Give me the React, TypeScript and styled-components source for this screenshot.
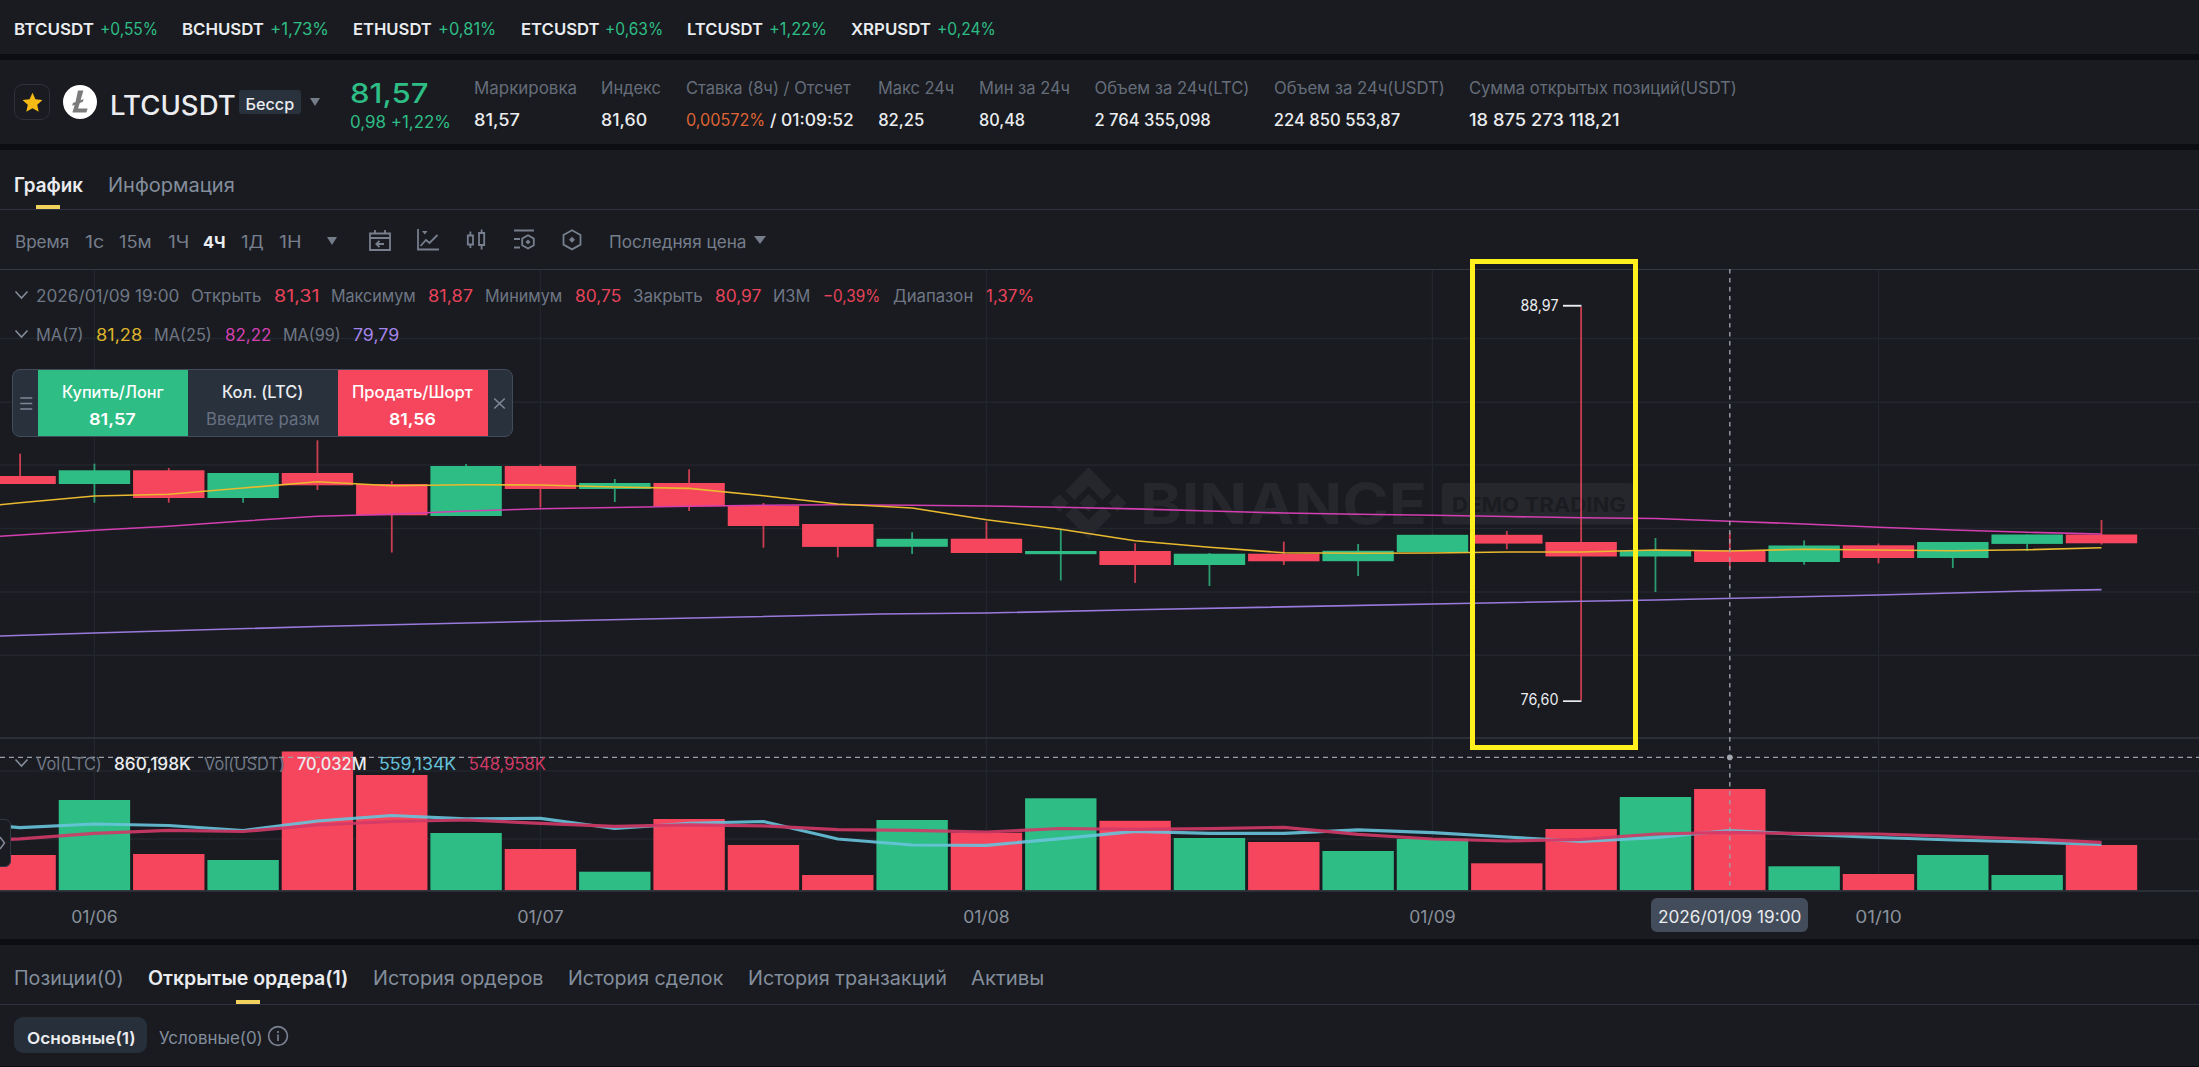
import React, { useLayoutEffect, useRef, useState } from "react";
import styled, { createGlobalStyle } from "styled-components";

const c = {
  bg: "#191b20",
  gap: "#0b0d11",
  line: "#2f3340",
  text: "#eaecef",
  mute: "#848e9c",
  dim: "#666d7a",
  legend: "#6f7785",
  tool: "#767e8c",
  green: "#2ebd85",
  red: "#f6465d",
  panel: "#29313d",
};

const Global = createGlobalStyle`
  * { box-sizing: border-box; }
  body {
    margin: 0;
    background: ${c.bg};
    color: ${c.text};
    font-family: Inter, "Open Sans", "Liberation Sans", sans-serif;
    overflow: hidden;
  }
`;

/* ---------- text ---------- */

interface TextStyle {
  $w: number;
  $size?: number;
  $weight?: number;
  $color?: string;
  $ml?: number;
}

const TextBox = styled.span<TextStyle>`
  display: block;
  flex: none;
  width: ${(p) => p.$w}px;
  margin-left: ${(p) => p.$ml ?? 0}px;
  font-size: ${(p) => p.$size ?? 16.6}px;
  font-weight: ${(p) => p.$weight ?? 400};
  line-height: 20px;
  color: ${(p) => p.$color ?? "inherit"};
  white-space: nowrap;
`;

const TextRun = styled.span`
  display: inline-block;
  transform-origin: 0 50%;
`;

interface TextProps {
  children: string;
  w: number;
  size?: number;
  weight?: number;
  color?: string;
  ml?: number;
}

/* Stretches a label so that it fills the width of its column. */
function Text({ children, w, size, weight, color, ml }: TextProps) {
  const ref = useRef<HTMLSpanElement>(null);
  const [scale, setScale] = useState(1);
  useLayoutEffect(() => {
    if (ref.current) setScale(w / ref.current.offsetWidth);
  }, [children, w]);
  return (
    <TextBox $w={w} $size={size} $weight={weight} $color={color} $ml={ml}>
      <TextRun ref={ref} style={{ transform: `scaleX(${scale})` }}>
        {children}
      </TextRun>
    </TextBox>
  );
}

/* ---------- layout ---------- */

const Page = styled.main`
  width: 2199px;
  height: 1067px;
  display: flex;
  flex-direction: column;
  background: ${c.bg};
  overflow: hidden;
`;

const Strip = styled.div`
  flex: none;
  height: 6px;
  background: ${c.gap};
`;

const Ticker = styled.header`
  flex: none;
  height: 54px;
  padding: 4px 0 0 14px;
  display: flex;
  align-items: center;
  gap: 24px;
`;

const TickerItem = styled.div`
  display: flex;
  gap: 6px;
`;

const SymbolBar = styled.section`
  flex: none;
  height: 84px;
  padding-left: 14px;
  display: flex;
  align-items: flex-start;
`;

const StarButton = styled.button`
  width: 36px;
  height: 36px;
  margin-top: 24px;
  padding: 0;
  display: flex;
  align-items: center;
  justify-content: center;
  background: none;
  border: 1px solid #2d3139;
  border-radius: 9px;
`;

const Coin = styled.svg`
  margin: 25px 0 0 13px;
  flex: none;
`;

const SymbolName = styled.div`
  margin: 35px 0 0 13px;
`;

const Badge = styled.div`
  margin: 30px 0 0 3px;
  width: 62px;
  height: 24px;
  padding-top: 4px;
  display: flex;
  justify-content: center;
  align-items: center;
  background: ${c.panel};
  border-radius: 3px;
`;

const Caret = styled.i<{ $ml: number; $mt?: number; $w?: number }>`
  flex: none;
  width: 0;
  height: 0;
  margin: ${(p) => p.$mt ?? 0}px 0 0 ${(p) => p.$ml}px;
  border-left: ${(p) => (p.$w ?? 11) / 2}px solid transparent;
  border-right: ${(p) => (p.$w ?? 11) / 2}px solid transparent;
  border-top: 8px solid #757d8a;
`;

const Price = styled.div`
  margin: 23px 0 0 30px;
  display: flex;
  flex-direction: column;
  gap: 9px;
`;

const Stats = styled.div`
  margin: 18px 0 0 23px;
  display: flex;
  gap: 24.4px;
`;

const Stat = styled.div`
  display: flex;
  flex-direction: column;
  gap: 12px;
`;

const StatValue = styled.div`
  display: flex;
  gap: 5px;
`;

const Tabs = styled.nav<{ $h: number; $pt: number }>`
  flex: none;
  height: ${(p) => p.$h}px;
  padding: ${(p) => p.$pt}px 0 0 13.5px;
  display: flex;
  align-items: stretch;
  gap: 24.5px;
  border-bottom: 1px solid ${c.line};
`;

const Tab = styled.div`
  display: flex;
  flex-direction: column;
  justify-content: space-between;
  align-items: center;
`;

const Underline = styled.div`
  width: 24px;
  height: 4px;
  background: #f0d25c;
`;

const Toolbar = styled.div`
  flex: none;
  height: 59px;
  padding: 4px 0 0 15px;
  display: flex;
  align-items: center;
`;

const ToolIcon = styled.svg<{ $ml: number }>`
  flex: none;
  width: 22px;
  height: 22px;
  margin: -3px 0 0 ${(p) => p.$ml}px;
  fill: none;
  stroke: #777f8e;
  stroke-width: 1.8;
`;

const ChartPanel = styled.section`
  flex: none;
  height: 670px;
  position: relative;
`;

const ChartSvg = styled.svg`
  display: block;
  font-family: Inter, "Liberation Sans", sans-serif;
`;

const Legend = styled.div<{ $top: number }>`
  position: absolute;
  left: 14px;
  top: ${(p) => p.$top}px;
  display: flex;
  align-items: flex-start;
  gap: 12.4px;
`;

const Chevron = styled.svg`
  flex: none;
  width: 15px;
  height: 10px;
  margin: 4px -5px 0 0;
  fill: none;
  stroke: #848c99;
  stroke-width: 1.6;
`;

const OrderWidget = styled.div`
  position: absolute;
  left: 12px;
  top: 100px;
  width: 501px;
  height: 68px;
  display: flex;
  overflow: hidden;
  background: ${c.panel};
  border: 1px solid #434c5a;
  border-radius: 8px;
`;

const Grip = styled.svg`
  flex: none;
  width: 24.5px;
  height: 66px;
  stroke: #7f8896;
  stroke-width: 1.6;
  fill: none;
`;

const OrderCell = styled.div<{ $bg?: string }>`
  flex: none;
  width: 150px;
  padding-top: 11.5px;
  display: flex;
  flex-direction: column;
  align-items: center;
  gap: 7px;
  background: ${(p) => p.$bg ?? "transparent"};
`;

const SideHandle = styled.div`
  position: absolute;
  left: -1px;
  top: 550px;
  width: 12px;
  height: 48px;
  background: ${c.bg};
  border: 1px solid #323843;
  border-radius: 0 6px 6px 0;
`;

const TimeTag = styled.div`
  position: absolute;
  left: 1651px;
  top: 629px;
  width: 157px;
  height: 34px;
  padding-top: 4px;
  display: flex;
  align-items: center;
  justify-content: center;
  background: #434c5b;
  border-radius: 6px;
`;

const Highlight = styled.div`
  position: absolute;
  left: 1470px;
  top: -10px;
  width: 168px;
  height: 491px;
  border: 5px solid #fff01e;
`;

const Filters = styled.div`
  flex: none;
  height: 61px;
  padding: 12px 0 0 14px;
  display: flex;
  align-items: flex-start;
`;

const Pill = styled.button`
  width: 133px;
  height: 36px;
  padding: 5px 2px 0 0;
  display: flex;
  align-items: center;
  justify-content: center;
  border: 0;
  border-radius: 9px;
  background: #272f3a;
  color: ${c.text};
  font-family: inherit;
`;

const FilterText = styled.div`
  display: flex;
  margin: 11px 0 0 11.5px;
`;

const InfoIcon = styled.svg`
  margin: 8px 0 0 4.5px;
  fill: none;
  stroke: #7b8392;
  stroke-width: 1.6;
`;

/* ---------- data ---------- */

const tickers: [string, number, string, number][] = [
  ["BTCUSDT", 80, "+0,55%", 58],
  ["BCHUSDT", 82, "+1,73%", 59],
  ["ETHUSDT", 79, "+0,81%", 58.5],
  ["ETCUSDT", 78.5, "+0,63%", 58],
  ["LTCUSDT", 76, "+1,22%", 58],
  ["XRPUSDT", 80, "+0,24%", 59],
];

const stats: [string, number, string, number][] = [
  ["Макс 24ч", 76, "82,25", 46],
  ["Мин за 24ч", 91.5, "80,48", 46],
  ["Объем за 24ч(LTC)", 155, "2 764 355,098", 116],
  ["Объем за 24ч(USDT)", 171, "224 850 553,87", 126],
  ["Сумма открытых позиций(USDT)", 268, "18 875 273 118,21", 150],
];

const legendPrice: [string, number, string, number][] = [
  ["Открыть", 70, "81,31", 45],
  ["Максимум", 84.5, "81,87", 45],
  ["Минимум", 77, "80,75", 46],
  ["Закрыть", 69.5, "80,97", 46],
  ["ИЗМ", 37.5, "−0,39%", 57],
  ["Диапазон", 80.5, "1,37%", 48],
];

const legendMa: [string, number, string, number, string][] = [
  ["MA(7)", 47.5, "81,28", 46, "#dcb32a"],
  ["MA(25)", 58, "82,22", 46, "#d341b0"],
  ["MA(99)", 57.5, "79,79", 46, "#a685ea"],
];

const bottomTabs: [string, number, boolean][] = [
  ["Позиции(0)", 110, false],
  ["Открытые ордера(1)", 200.5, true],
  ["История ордеров", 170.5, false],
  ["История сделок", 155, false],
  ["История транзакций", 199, false],
  ["Активы", 73, false],
];

/* Chart coordinates are window pixels; the svg view box starts at y = 269. */
const TOP = 269;
const STEP = 74.335;
const cx = (i: number) => 20.1 + i * STEP;

/* up, body top, body bottom, wick top, wick bottom, volume top */
const candles: [number, number, number, number, number, number][] = [
  [0, 476, 484, 453.7, 484, 855],
  [1, 470.3, 484, 463.7, 502.7, 800],
  [0, 470.3, 498, 468, 502.7, 854],
  [1, 473, 498, 473, 502.7, 860],
  [0, 473, 485.3, 440.3, 490, 751.5],
  [0, 484, 515.3, 481, 552.5, 775],
  [1, 466, 516, 464, 516, 833],
  [0, 466, 489, 464.3, 507.5, 849],
  [1, 483, 489, 479, 502, 871.7],
  [0, 483, 506.3, 469.3, 511, 819],
  [0, 506, 526, 503, 547.7, 845],
  [0, 524, 546.9, 524, 557.3, 875],
  [1, 538.8, 546.8, 532.3, 554, 820],
  [0, 538.7, 553, 521.7, 553, 832.7],
  [1, 551, 554.2, 529.7, 580.5, 798.3],
  [0, 551, 565, 543.3, 583, 820.8],
  [1, 553.7, 565, 553, 586, 838],
  [0, 553.7, 561.3, 541.7, 565, 842],
  [1, 550.8, 561.2, 544, 576, 851],
  [1, 534.8, 552, 534.8, 552, 838.8],
  [0, 534.8, 543.6, 531, 549.3, 863.3],
  [0, 542, 556.5, 307, 700, 829],
  [1, 550.3, 556.5, 538, 592, 797],
  [0, 550.3, 562, 532.7, 568.3, 789],
  [1, 545.5, 562, 540.5, 564.7, 866.3],
  [0, 545.3, 558, 543.5, 563.3, 874],
  [1, 542, 558, 542, 568, 855],
  [1, 534.5, 543.9, 534.5, 551, 875],
  [0, 534.5, 543.3, 520, 544.5, 845],
];

const indexed = (ys: number[]) => ys.map((y, i) => `${cx(i)},${y}`);

const ma7 = ["0,504.7", ...indexed([
  502.8, 496, 494.2, 488, 481.7, 485.7, 484.7, 485, 487, 488.4, 495.7, 504, 508, 519.7, 529.3,
  540.7, 547.3, 552.7, 553.3, 553, 552, 552, 550, 551, 549.3, 550, 550.7, 549.8, 547.7,
])].join(" ");

const ma25 = ["0,536.3", ...indexed([
  535, 530.3, 526.3, 521, 516.3, 514.3, 511, 508.8, 507.5, 506.3, 505.2, 504.7, 505.2, 506, 507.3,
  508.9, 511, 513, 514.2, 515.3, 516.5, 517.8, 518.5, 521.3, 524, 527.3, 530, 532.3, 534,
])].join(" ");

const ma99 =
  "0,636 94,633 317,626.5 540,621.3 880,614 986,613 1135,609.8 1472,603.2 1655,600 1878,595 2027,591 2101.6,589.6";

const volBlue = ["8,826.7", ...indexed([
  827.7, 824, 825.5, 830.5, 821, 815.5, 818.8, 818.3, 828.5, 823.3, 821.5, 839, 845, 845.3, 838.7,
  831.3, 833.3, 833.3, 829.8, 832.7, 837, 841.3, 837.7, 830.5, 834.5, 837.5, 840, 842, 844.3,
])].join(" ");

const volPink = ["8,839.3", ...indexed([
  838.8, 833.3, 830.3, 831.5, 825, 821.5, 820, 823.3, 826.3, 824.8, 825.8, 829.7, 830.3, 832, 828.5,
  829.3, 828.7, 827.3, 834.3, 839, 841, 839.3, 834, 832.3, 833.7, 834, 836.3, 839, 842.3,
])].join(" ");

const gridPrice = [338.5, 402.3, 465, 528.5, 592, 655.3];
const gridVolume = [771, 839];
const days: [string, number][] = [
  ["01/06", 94.4],
  ["01/07", 540.4],
  ["01/08", 986.4],
  ["01/09", 1432.4],
  ["01/10", 1878.5],
];

/* ---------- chart ---------- */

function Watermark() {
  return (
    <g fill="#26272c">
      <g transform="translate(1088.5 503)">
        <path d="M0 -36 L23 -12 L14 -3 L0 -17 L-14 -3 L-23 -12 Z" />
        <path d="M0 36 L23 12 L14 3 L0 17 L-14 3 L-23 12 Z" />
        <path d="M0 -9 L9 0 L0 9 L-9 0 Z" />
        <path d="M-29 -9 L-20 0 L-29 9 L-38 0 Z" />
        <path d="M29 -9 L38 0 L29 9 L20 0 Z" />
      </g>
      <text x="1140" y="523.5" fontSize="57" fontWeight="700" textLength="287" lengthAdjust="spacingAndGlyphs">
        BINANCE
      </text>
      <rect x="1442" y="483" width="192" height="41.5" rx="4" />
      <text x="1452" y="512" fontSize="20.5" fontWeight="700" fill="#1b1c21" textLength="174" lengthAdjust="spacingAndGlyphs">
        DEMO TRADING
      </text>
    </g>
  );
}

function Chart() {
  const crossX = cx(23);
  return (
    <ChartSvg width="2199" height="670" viewBox={`0 ${TOP} 2199 670`}>
      <g stroke="#23262c" strokeWidth="1.4">
        {[...gridPrice, ...gridVolume].map((y) => (
          <line key={y} x1="0" x2="2199" y1={y} y2={y} />
        ))}
        {days.map(([d, x]) => (
          <line key={d} x1={x} x2={x} y1={TOP} y2="890" />
        ))}
      </g>
      <rect x="0" y="269" width="2199" height="1" fill="#333846" />
      <rect x="0" y="737" width="2199" height="2" fill="#2b2f38" />
      <Watermark />
      {candles.map(([up, top, bottom, high, low, vol], i) => {
        const color = up ? c.green : c.red;
        return (
          <g key={i} fill={color}>
            <rect x={cx(i) - 0.9} y={high} width="1.8" height={low - high} opacity="0.8" />
            <rect x={cx(i) - 35.7} y={top} width="71.4" height={bottom - top} />
            <rect x={cx(i) - 35.7} y={vol} width="71.4" height={890.3 - vol} />
          </g>
        );
      })}
      <rect x="0" y="890.3" width="2199" height="1.4" fill="#333740" />
      <g fill="none" strokeWidth="1.6" strokeLinejoin="round">
        <polyline points={ma99} stroke="#9a79dd" />
        <polyline points={ma25} stroke="#d33fb0" />
        <polyline points={ma7} stroke="#e9b92f" />
      </g>
      <g fill="none" strokeWidth="3.2" strokeLinejoin="round" opacity="0.9">
        <polyline points={volBlue} stroke="#68c4dc" />
        <polyline points={volPink} stroke="#d23a68" />
      </g>
      <g stroke="#9ba0a8" strokeWidth="1.4">
        <line x1={crossX} x2={crossX} y1={TOP} y2="888" strokeDasharray="4.5 4.5" />
        <line x1="0" x2="2199" y1="757.4" y2="757.4" strokeDasharray="5 4" />
      </g>
      <circle cx={crossX} cy="757.4" r="2.8" fill="#a3a8b0" />
      <g fill="#eaecef" fontSize="15.5">
        <text x="1520.5" y="310.7" textLength="38" lengthAdjust="spacingAndGlyphs">88,97</text>
        <rect x="1563" y="304.8" width="18.5" height="1.9" />
        <text x="1520.5" y="705.3" textLength="38" lengthAdjust="spacingAndGlyphs">76,60</text>
        <rect x="1563" y="700.3" width="18.5" height="1.7" />
      </g>
      <g fill="#8a919c" fontSize="16.6" textAnchor="middle">
        {days.map(([d, x]) => (
          <text key={d} x={x} y="923" textLength="46.5" lengthAdjust="spacingAndGlyphs">{d}</text>
        ))}
      </g>
    </ChartSvg>
  );
}

const Down = () => (
  <Chevron viewBox="0 0 15 10">
    <path d="M1.5 1.5 L7.5 8 L13.5 1.5" />
  </Chevron>
);

/* ---------- app ---------- */

export default function App() {
  return (
    <Page>
      <Global />
      <Ticker>
        {tickers.map(([name, w, pct, pw]) => (
          <TickerItem key={name}>
            <Text w={w} weight={600}>{name}</Text>
            <Text w={pw} color={c.green}>{pct}</Text>
          </TickerItem>
        ))}
      </Ticker>
      <Strip />

      <SymbolBar>
        <StarButton>
          <svg width="21" height="21" viewBox="0 0 20 20">
            <path
              d="M10 0.8 L12.8 6.8 L19.5 7.6 L14.5 12.1 L15.9 18.7 L10 15.4 L4.1 18.7 L5.5 12.1 L0.5 7.6 L7.2 6.8 Z"
              fill="#f5bb14"
            />
          </svg>
        </StarButton>
        <Coin width="34" height="34" viewBox="0 0 34 34">
          <circle cx="17" cy="17" r="17" fill="#fff" />
          <path
            d="M15 5.5 H20.4 L17.6 15.2 L20.6 14.1 L19.9 16.8 L16.8 18 L15 23.4 H24.6 L23.4 27.6 H9.4 L11.7 19.9 L9.2 20.8 L9.9 18.1 L12.5 17.1 Z"
            fill="#7b7b7b"
          />
        </Coin>
        <SymbolName>
          <Text w={126} size={26.5} weight={500}>LTCUSDT</Text>
        </SymbolName>
        <Badge>
          <Text w={49} size={16.2} weight={500}>Бесср</Text>
        </Badge>
        <Caret $ml={8.5} $mt={38} />
        <Price>
          <Text w={78} size={27.5} weight={500} color={c.green}>81,57</Text>
          <Text w={101} color={c.green}>0,98 +1,22%</Text>
        </Price>
        <Stats>
          <Stat>
            <Text w={103} color={c.dim}>Маркировка</Text>
            <Text w={46} weight={500}>81,57</Text>
          </Stat>
          <Stat>
            <Text w={60.5} color={c.dim}>Индекс</Text>
            <Text w={46} weight={500}>81,60</Text>
          </Stat>
          <Stat>
            <Text w={165} color={c.dim}>Ставка (8ч) / Отсчет</Text>
            <StatValue>
              <Text w={79} color="#dd6335">0,00572%</Text>
              <Text w={84} weight={500}>/ 01:09:52</Text>
            </StatValue>
          </Stat>
          {stats.map(([label, lw, value, vw]) => (
            <Stat key={label}>
              <Text w={lw} color={c.dim}>{label}</Text>
              <Text w={vw} weight={500}>{value}</Text>
            </Stat>
          ))}
        </Stats>
      </SymbolBar>
      <Strip />

      <Tabs $h={60} $pt={25}>
        <Tab>
          <Text w={69.5} size={19.5} weight={600}>График</Text>
          <Underline />
        </Tab>
        <Tab>
          <Text w={126.5} size={19.5} color={c.mute}>Информация</Text>
        </Tab>
      </Tabs>

      <Toolbar>
        <Text w={54.5} color={c.tool}>Время</Text>
        <Text w={19} ml={15.5} color={c.tool}>1с</Text>
        <Text w={33} ml={15} color={c.tool}>15м</Text>
        <Text w={21} ml={15.5} color={c.tool}>1Ч</Text>
        <Text w={22.5} ml={14} weight={700}>4Ч</Text>
        <Text w={22.5} ml={15.5} color={c.tool}>1Д</Text>
        <Text w={22.5} ml={15.5} color={c.tool}>1Н</Text>
        <Caret $ml={26} $mt={-2} />
        <ToolIcon $ml={31.5} viewBox="0 0 22 22">
          <path d="M1 4.5 H21 V21 H1 Z M1 9 H21 M6 1 V4.5 M16 1 V4.5 M15 15 H7.5 M10.5 11.8 L7.3 15 L10.5 18.2" />
        </ToolIcon>
        <ToolIcon $ml={26.5} viewBox="0 0 22 22">
          <path d="M1 0 V20.5 H22 M3.5 17 L9 11 L12.5 14 L20.5 6" />
          <path d="M5 2 L10.5 2 L7.8 5.4 Z" fill="#777f8e" stroke="none" />
        </ToolIcon>
        <ToolIcon $ml={26} viewBox="0 0 22 22">
          <path d="M2.8 6.5 H8 V15.5 H2.8 Z M5.4 2.5 V6.5 M5.4 15.5 V19 M14 4 H19.2 V16 H14 Z M16.6 0.5 V4 M16.6 16 V20.5" />
        </ToolIcon>
        <ToolIcon $ml={26} viewBox="0 0 22 22">
          <path d="M1 1.5 H21 M1 10 H7 M1 18.5 H7 M15 6.3 L20.8 9.6 V16.2 L15 19.5 L9.2 16.2 V9.6 Z" />
          <path d="M15 10.4 L17.5 12.9 L15 15.4 L12.5 12.9 Z" fill="#777f8e" stroke="none" />
        </ToolIcon>
        <ToolIcon $ml={26} viewBox="0 0 22 22">
          <path d="M11 1.2 L19.5 6 V15.6 L11 20.4 L2.5 15.6 V6 Z" />
          <path d="M11 7.8 L14 10.8 L11 13.8 L8 10.8 Z" fill="#777f8e" stroke="none" />
        </ToolIcon>
        <Text w={137.5} ml={26} color={c.tool}>Последняя цена</Text>
        <Caret $ml={7.5} $mt={-3} $w={12} />
      </Toolbar>

      <ChartPanel>
        <Chart />
        <Legend $top={17.3}>
          <Down />
          <Text w={143} ml={-0.5} color={c.legend}>2026/01/09 19:00</Text>
          {legendPrice.map(([label, lw, value, vw]) => (
            <React.Fragment key={label}>
              <Text w={lw} color={c.legend}>{label}</Text>
              <Text w={vw} color="#e8435a">{value}</Text>
            </React.Fragment>
          ))}
        </Legend>
        <Legend $top={55.5}>
          <Down />
          {legendMa.map(([label, lw, value, vw, color], i) => (
            <React.Fragment key={label}>
              <Text w={lw} ml={i === 0 ? -0.5 : 0} color={c.legend}>{label}</Text>
              <Text w={vw} color={color}>{value}</Text>
            </React.Fragment>
          ))}
        </Legend>
        <OrderWidget>
          <Grip viewBox="0 0 24 66">
            <path d="M7 28 H19 M7 33.5 H19 M7 39 H19" />
          </Grip>
          <OrderCell $bg={c.green}>
            <Text w={102} weight={500} color="#fff">Купить/Лонг</Text>
            <Text w={47} weight={600} color="#fff">81,57</Text>
          </OrderCell>
          <OrderCell>
            <Text w={81} weight={500}>Кол. (LTC)</Text>
            <Text w={114} color="#667080">Введите разм</Text>
          </OrderCell>
          <OrderCell $bg={c.red}>
            <Text w={121} weight={500} color="#fff">Продать/Шорт</Text>
            <Text w={47} weight={600} color="#fff">81,56</Text>
          </OrderCell>
          <Grip viewBox="0 0 24 66">
            <path d="M6 28.5 L16.5 38.5 M16.5 28.5 L6 38.5" />
          </Grip>
        </OrderWidget>
        <Legend $top={484.5}>
          <Down />
          <Text w={66} ml={-0.5} color={c.legend}>Vol(LTC)</Text>
          <Text w={77} weight={500}>860,198K</Text>
          <Text w={81} color={c.legend}>Vol(USDT)</Text>
          <Text w={70} weight={500}>70,032M</Text>
          <Text w={77} color="#63c2da">559,134K</Text>
          <Text w={77} color="#cf3a66">548,958K</Text>
        </Legend>
        <SideHandle>
          <svg width="10" height="46" viewBox="0 0 10 46" fill="none" stroke="#848c99" strokeWidth="1.5">
            <path d="M0 17 L4.5 23 L0 29" />
          </svg>
        </SideHandle>
        <TimeTag>
          <Text w={143}>2026/01/09 19:00</Text>
        </TimeTag>
        <Highlight />
      </ChartPanel>
      <Strip />

      <Tabs $h={60} $pt={22.5}>
        {bottomTabs.map(([label, w, active]) => (
          <Tab key={label}>
            <Text w={w} size={19.5} weight={active ? 600 : 400} color={active ? c.text : c.mute}>
              {label}
            </Text>
            {active && <Underline />}
          </Tab>
        ))}
      </Tabs>
      <Filters>
        <Pill>
          <Text w={109} weight={600}>Основные(1)</Text>
        </Pill>
        <FilterText>
          <Text w={104} color={c.mute}>Условные(0)</Text>
        </FilterText>
        <InfoIcon width="22" height="22" viewBox="0 0 22 22">
          <circle cx="11" cy="11" r="9.4" />
          <path d="M11 9.5 V16 M11 6 V8" />
        </InfoIcon>
      </Filters>
      <Strip />
    </Page>
  );
}
